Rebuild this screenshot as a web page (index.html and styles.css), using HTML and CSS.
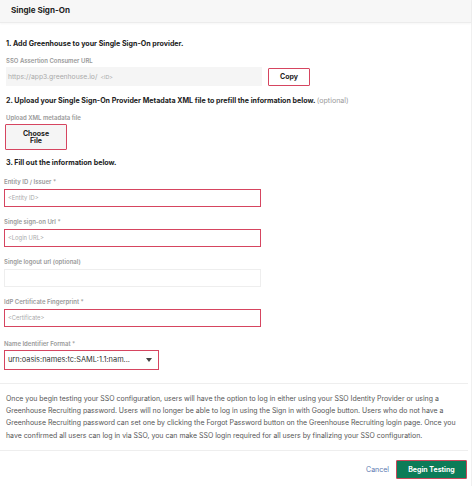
FILE: index.html
```html
<!DOCTYPE html>
<html lang="en">
<head>
<meta charset="utf-8">
<title>Single Sign-On</title>
<link rel="stylesheet" href="styles.css">
</head>
<body>
<div class="card">
  <header class="topbar"><h1 class="title">Single Sign-On</h1></header>
  <main class="content">
    <section class="step">
      <h2 class="step-title">1. Add Greenhouse to your Single Sign-On provider.</h2>
      <div class="field-label">SSO Assertion Consumer URL</div>
      <div class="url-row">
        <div class="url-box"><span class="url">https://app3.greenhouse.io/</span><span class="url-id">&lt;ID&gt;</span></div>
        <button class="btn-outline btn-copy">Copy</button>
      </div>
    </section>
    <section class="step">
      <h2 class="step-title">2. Upload your Single Sign-On Provider Metadata XML file to prefill the information below. <span class="optional">(optional)</span></h2>
      <div class="field-label">Upload XML metadata file</div>
      <button class="btn-file">Choose<br>File</button>
    </section>
    <section class="step">
      <h2 class="step-title">3. Fill out the information below.</h2>
      <div class="field">
        <div class="field-label">Entity ID / Issuer *</div>
        <div class="input invalid"><span class="placeholder">&lt;Entity ID&gt;</span></div>
      </div>
      <div class="field">
        <div class="field-label">Single sign-on Url *</div>
        <div class="input invalid"><span class="placeholder">&lt;Login URL&gt;</span></div>
      </div>
      <div class="field">
        <div class="field-label">Single logout url (optional)</div>
        <div class="input"></div>
      </div>
      <div class="field">
        <div class="field-label">IdP Certificate Fingerprint *</div>
        <div class="input invalid"><span class="placeholder">&lt;Certificate&gt;</span></div>
      </div>
      <div class="field field-select">
        <div class="field-label">Name Identifier Format *</div>
        <div class="select invalid">
          <span class="select-value">urn:oasis:names:tc:SAML:1.1:nam...</span>
          <svg class="caret" width="6" height="4" viewBox="0 0 6 4"><path d="M0 0H6L3 4Z" fill="#444"/></svg>
        </div>
      </div>
    </section>
    <hr class="divider">
    <p class="note">Once you begin testing your SSO configuration, users will have the option to log in either using your SSO Identity Provider or using a Greenhouse Recruiting password. Users will no longer be able to log in using the Sign in with Google button. Users who do not have a Greenhouse Recruiting password can set one by clicking the Forgot Password button on the Greenhouse Recruiting login page. Once you have confirmed all users can log in via SSO, you can make SSO login required for all users by finalizing your SSO configuration.</p>
    <hr class="divider">
    <div class="actions">
      <a class="link-cancel" href="#">Cancel</a>
      <button class="btn-primary">Begin Testing</button>
    </div>
  </main>
</div>
</body>
</html>
```
FILE: styles.css
```css
* { box-sizing: border-box; }
html, body { margin: 0; padding: 0; background: #fff; }
body { font-family: Inter, "Noto Sans", sans-serif; color: #222; }

.card {
  width: 472px;
  min-height: 486px;
  border-right: 1px solid #f0f0f0;
}

.topbar {
  height: 23px;
  background: #f7f7f7;
  border-bottom: 1px solid #ececec;
  box-shadow: 0 1px 2px rgba(0,0,0,0.04);
  display: flex;
  align-items: center;
  padding: 0 0 2px 11px;
}
.title { margin: 0; font-size: 8.05px; font-weight: 700; color: #222; }

.content { padding: 16px 4px 0 6px; }

.step-title {
  margin: 0 0 8px;
  font-size: 7.1px;
  line-height: 10px;
  font-weight: 700;
  color: #222;
}
.optional { font-weight: 400; color: #999; }

.field-label {
  font-size: 6px;
  line-height: 8px;
  font-weight: 600;
  color: #999;
  margin-bottom: 2px;
}

.url-row { display: flex; align-items: center; gap: 6px; margin-bottom: 10px; }
.url-box {
  width: 256px;
  height: 19px;
  background: #f5f5f5;
  display: flex;
  align-items: center;
  padding-left: 2px;
  gap: 3px;
}
.url { font-size: 6.8px; color: #aaa; }
.url-id { font-size: 5.4px; color: #aaa; }

button { font-family: inherit; cursor: pointer; }
.btn-outline {
  height: 18px;
  width: 42px;
  background: #fff;
  border: 1.5px solid #d64560;
  border-radius: 1px;
  font-size: 7px;
  font-weight: 700;
  color: #222;
  padding: 0;
}

.btn-file {
  display: block;
  margin: 2px 0 8px -1px;
  width: 62px;
  height: 26px;
  background: #f5f5f5;
  border: 1.5px solid #d64560;
  border-radius: 1px;
  font-size: 7px;
  line-height: 7.5px;
  font-weight: 700;
  color: #222;
  padding: 0;
}

.step:nth-of-type(3) .step-title { margin-bottom: 9.5px; }

.field { margin-left: -2px; margin-bottom: 11px; }
.field .field-label { margin-bottom: 3px; }
.field-select { margin-top: 13.5px; margin-bottom: 0; }
.field-select .field-label { margin-bottom: 1.5px; }

.input {
  width: 257px;
  height: 18px;
  border: 1px solid #eee;
  display: flex;
  align-items: center;
  padding-left: 3px;
}
.input.invalid, .select.invalid { border: 1.5px solid #d64560; }
.placeholder { font-size: 5.8px; color: #aaa; }

.select {
  width: 155px;
  height: 20px;
  display: flex;
  align-items: center;
  justify-content: space-between;
  padding: 0 6px 0 3px;
  background: #fff;
}
.select-value { font-size: 7.4px; color: #333; }
.caret { display: block; }

.divider {
  margin: 13px 0 0 -6px;
  width: 468px;
  border: 0;
  border-top: 1px solid #eee;
  height: 0;
}

.note {
  margin: 9.5px 0 0;
  font-size: 6.95px;
  line-height: 12.2px;
  color: #555;
  width: 462px;
}
.note + .divider { margin-top: 8px; }

.actions {
  display: flex;
  justify-content: flex-end;
  align-items: center;
  gap: 7px;
  margin-top: 9.5px;
}
.link-cancel { font-size: 7px; color: #5a78b0; text-decoration: none; }
.btn-primary {
  height: 19px;
  width: 71px;
  background: #0c7c58;
  border: 1.5px solid #c8485a;
  border-radius: 1px;
  color: #fff;
  font-size: 7px;
  font-weight: 700;
  padding: 0;
}
```
